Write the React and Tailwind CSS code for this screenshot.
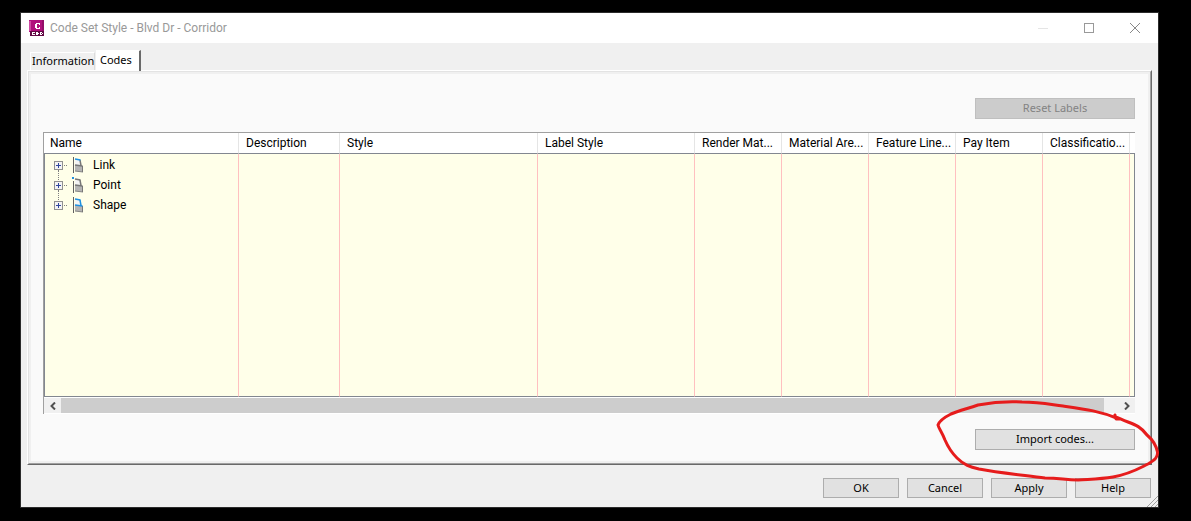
import { useState } from 'react'

const COLUMNS = [
  { label: 'Name',              width: 'w-[195px] pl-1.5' },
  { label: 'Description',       width: 'w-[101px] pl-[7px]' },
  { label: 'Style',             width: 'w-[198px] pl-[7px]' },
  { label: 'Label Style',       width: 'w-[157px] pl-[7px]' },
  { label: 'Render Mat...',     width: 'w-[87px] pl-[7px]' },
  { label: 'Material Are...',   width: 'w-[87px] pl-[7px]' },
  { label: 'Feature Line...',   width: 'w-[87px] pl-[7px]' },
  { label: 'Pay Item',          width: 'w-[87px] pl-[7px]' },
  { label: 'Classificatio...',  width: 'w-[87px] pl-[7px]' },
]

const CODES = ['Link', 'Point', 'Shape']

const TABS = [
  { label: 'Information', width: 'w-[65px]' },
  { label: 'Codes',       width: 'w-[45px]' },
]

const FOOTER_BUTTONS = ['OK', 'Cancel', 'Apply', 'Help']

function AppLogo() {
  return (
    <svg width="15" height="16" viewBox="0 0 15 16" shapeRendering="crispEdges" aria-hidden="true">
      <path d="M0 0h15v12H0z" fill="#b0107c" />
      <path d="M0 1h2v10H0z" fill="#cf4aa4" />
      <path d="M13 0h2v12h-2z" fill="#930d68" />
      <path d="M1 11h14v5H1z" fill="#620a45" />
      <path d="M7 3h4v1H7zM6 4h2v4H6zM7 8h4v1H7zM10 4h1v1h-1zM10 7h1v1h-1z" fill="#fff" />
      <path d="M4 12h2v1H4zM3 12h1v3H3zM4 14h2v1H4zM7 12h2v3H7zM8 13h2v1H8zM11 12h2v1h-2zM11 12h1v3h-1zM13 13h1v1h-1zM11 14h2v1h-2z" fill="#fff" />
    </svg>
  )
}

function CodeIcon({ kind }) {
  const topColor = kind === 'Point' ? '#777' : '#1e90e0'
  const sideColor = kind === 'Shape' ? '#1e90e0' : '#777'
  return (
    <svg width="12" height="16" viewBox="0 0 12 16" fill="none" className="shrink-0" aria-hidden="true">
      <path d={kind === 'Point' ? 'M1.5 4v12' : 'M1.5 0v16'} stroke="#5f5f5f" />
      <path d="M3 2l5 1l1 5H3z" fill="#f4f4f4" />
      <path d="M3 8l8 1v6l-8 -1z" fill="#b5b5b5" />
      <path d="M3 14l8 1" stroke="#858585" />
      <path d="M10.500 9v6" stroke="#777" />
      <path d="M3 8l7.500 1" stroke={sideColor} strokeWidth="1.500" />
      <path d="M8 3l1 5.500" stroke={sideColor} strokeWidth="1.500" />
      <path d="M3 2l5.500 1" stroke={topColor} strokeWidth="1.500" />
      {kind === 'Point' && <path d="M0 0h2v2H0z" fill="#1e90e0" />}
    </svg>
  )
}

function ExpandBox() {
  return (
    <svg width="9" height="9" viewBox="0 0 9 9" shapeRendering="crispEdges" aria-hidden="true">
      <path d="M0 0h9v9H0z" fill="#919191" />
      <path d="M1 1h7v7H1z" fill="#f4f4f4" />
      <path d="M2 4h5v1H2zM4 2h1v5H4z" fill="#31479e" />
    </svg>
  )
}

function PushButton({ size, ...props }) {
  return (
    <button
      type="button"
      className={`${size} flex items-center justify-center border border-[#adadad] bg-[#e1e1e1] disabled:border-[#bfbfbf] disabled:bg-[#ccc] disabled:text-[#838383]`}
      {...props}
    />
  )
}

function TitleBar() {
  return (
    <header className="flex h-[30px] shrink-0 items-center bg-white pl-2">
      <AppLogo />
      <h1 className="grow pl-1.5 font-['Roboto','Open_Sans',sans-serif] text-xs text-[#999]">
        Code Set Style - Blvd Dr - Corridor
      </h1>
      <button type="button" aria-label="Minimize" disabled className="flex w-[46px] justify-center">
        <span className="h-px w-2.5 bg-[#e5e5e5]" />
      </button>
      <button type="button" aria-label="Maximize" className="flex w-[46px] justify-center">
        <span className="size-2.5 border border-[#999]" />
      </button>
      <button type="button" aria-label="Close" className="flex w-[46px] justify-center">
        <svg width="10" height="10" viewBox="0 0 10 10" stroke="#888" aria-hidden="true">
          <path d="M0 0l10 10M10 0l-10 10" />
        </svg>
      </button>
    </header>
  )
}

function CodesTable() {
  return (
    <div className="flex grow flex-col border-t border-l border-[#a0a0a0] font-['Roboto','Open_Sans',sans-serif] text-xs">
      <div className="flex grow overflow-hidden">
        <table className="w-full table-fixed border-separate border-spacing-0">
          <thead>
            <tr className="h-[21px] bg-white text-left">
              {COLUMNS.map(col => (
                <th
                  key={col.label}
                  className={`${col.width} border-r border-b border-r-[#e5e5e5] border-b-[#828790] py-0 pr-0 font-normal whitespace-nowrap`}
                >
                  {col.label}
                </th>
              ))}
              <td className="border-b border-[#828790] p-0" />
            </tr>
          </thead>
          <tbody className="bg-[#ffffe9]">
            {CODES.map((code, i) => (
              <tr key={code} className="h-5">
                <td className="border-r border-l border-r-[#ffc0c0] border-l-[#828790] p-0">
                  <div className="relative flex h-5 items-center pt-0.5 pl-[9px]">
                    {i > 0 && <span className="absolute -top-1 left-[13px] h-2.5 border-l border-dotted border-[#808080]" />}
                    <button type="button" aria-label={`Expand ${code}`}>
                      <ExpandBox />
                    </button>
                    <span className="mr-[5px] ml-px w-[3px] border-t border-dotted border-[#808080]" />
                    <CodeIcon kind={code} />
                    <span className="pl-[9px]">{code}</span>
                  </div>
                </td>
                {COLUMNS.slice(1).map(col => (
                  <td key={col.label} className="border-r border-[#ffc0c0] p-0" />
                ))}
                <td className="border-r border-[#828790] p-0" />
              </tr>
            ))}
            <tr>
              <td className="border-r border-b border-l border-[#828790] border-r-[#ffc0c0] p-0" />
              {COLUMNS.slice(1).map(col => (
                <td key={col.label} className="border-r border-b border-r-[#ffc0c0] border-b-[#828790] p-0" />
              ))}
              <td className="border-r border-b border-[#828790] p-0" />
            </tr>
          </tbody>
        </table>
      </div>

      {/* horizontal scroll bar */}
      <div className="flex h-[17px] border-y border-white bg-[#f0f0f0]">
        <button type="button" aria-label="Scroll left" className="flex w-[17px] items-center justify-center">
          <svg width="6" height="8" viewBox="0 0 6 8" fill="none" stroke="#505050" strokeWidth="2" aria-hidden="true">
            <path d="M5 0.500L1.500 4L5 7.500" />
          </svg>
        </button>
        <span className="grow bg-[#cdcdcd]" />
        <button type="button" aria-label="Scroll right" className="flex w-[31px] items-center justify-end pr-[5px]">
          <svg width="6" height="8" viewBox="0 0 6 8" fill="none" stroke="#505050" strokeWidth="2" aria-hidden="true">
            <path d="M1 0.500L4.500 4L1 7.500" />
          </svg>
        </button>
      </div>
    </div>
  )
}

function RedMarker() {
  return (
    <svg
      width="224"
      height="84"
      viewBox="936 400 224 84"
      fill="none"
      stroke="#e61c1c"
      strokeWidth="3"
      strokeLinecap="round"
      strokeLinejoin="round"
      className="pointer-events-none absolute -right-0.5 bottom-[23px]"
      aria-hidden="true"
    >
      <path d="M1115 415l1 4l3 0C1100 411 1084 409 1063 406C1048 404 1040 402 1022 402C1004 401 994 402 978 405C966 409 958 411 951 414C943 418 939 422 938 425C939 429 942 432 945 440C948 447 951 452 957 458C964 465 970 467 979 469C1000 473 1022 475 1045 478C1060 478 1065 480 1078 480C1094 479 1101 479 1113 477C1130 474 1138 469 1148 464C1155 460 1158 457 1157.500 452C1156 445 1153 440 1147 435C1141 427 1136 425 1128 422C1120 419 1118 417 1115 417" />
    </svg>
  )
}

export default function App() {
  const [tab, setTab] = useState('Codes')

  return (
    <div className="flex min-h-screen flex-col bg-black pt-3 pr-8 pb-[13px] pl-5 font-['Noto_Sans','Open_Sans',sans-serif] text-[11px] text-black">
      <div className="relative flex grow flex-col border border-[#2b2b2b] bg-[#f0f0f0]">
        <TitleBar />

        <div role="tablist" className="z-10 -mb-px flex items-end gap-px pt-[7px] pl-[9px]">
          {TABS.map(({ label, width }) => (
            <button
              key={label}
              type="button"
              role="tab"
              aria-selected={tab === label}
              onClick={() => setTab(label)}
              className={`${width} border-t border-l border-t-white border-l-white pb-0.5 text-left ${
                tab === label
                  ? 'h-[21px] border-r-2 border-r-[#696969] bg-white pl-[3px]'
                  : 'mb-px h-[18px] border-r border-r-[#dcdcdc] pl-px'
              }`}
            >
              {label}
            </button>
          ))}
        </div>

        <main className="mx-1.5 flex grow flex-col border border-white border-r-[#696969] border-b-[#696969]">
          <div className="flex grow flex-col border border-[#e3e3e3] border-r-[#a0a0a0] border-b-[#a0a0a0]">
            <div
              role="tabpanel"
              className="flex grow flex-col border-2 border-[#f0f0f0] bg-[#fafafa] pt-6 pr-[13px] pb-[11px] pl-3"
            >
              {tab === 'Codes' && (
                <>
                  <div className="mb-[13px] flex justify-end">
                    <PushButton size="h-[21px] w-40" disabled>Reset Labels</PushButton>
                  </div>
                  <CodesTable />
                  <div className="mt-[15px] flex justify-end">
                    <PushButton size="h-[21px] w-40">Import codes...</PushButton>
                  </div>
                </>
              )}
            </div>
          </div>
        </main>

        <footer className="flex justify-end gap-2 pt-[13px] pr-[7px] pb-[9px]">
          {FOOTER_BUTTONS.map(label => (
            <PushButton key={label} size="h-5 w-[76px]">{label}</PushButton>
          ))}
        </footer>

        <svg width="11" height="11" viewBox="0 0 11 11" stroke="#a0a0a0" className="absolute right-0 bottom-0" aria-hidden="true">
          <path d="M0 11L11 0M4 11l7 -7M8 11l3 -3" />
        </svg>
        <RedMarker />
      </div>
    </div>
  )
}
